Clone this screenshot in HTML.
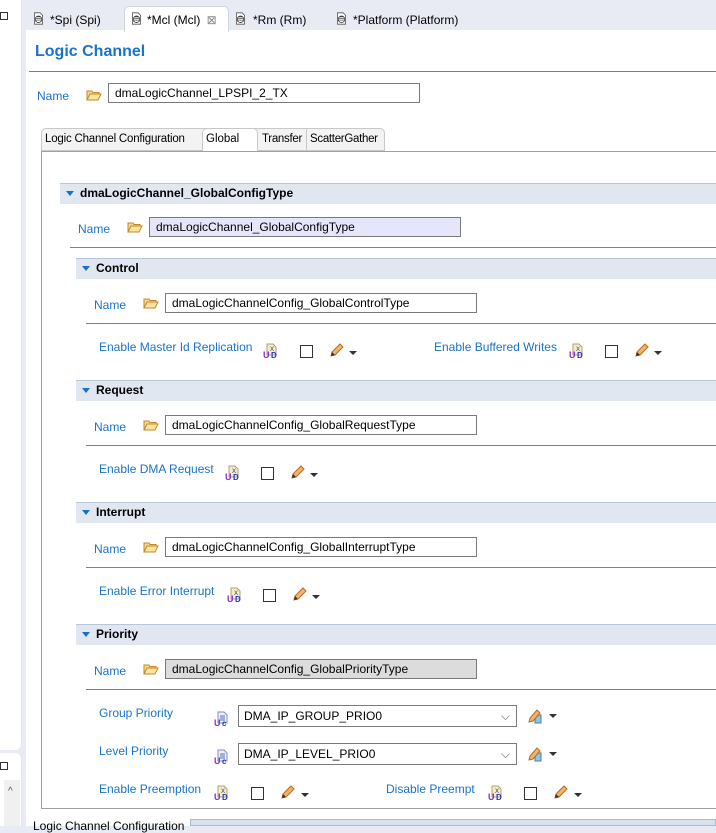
<!DOCTYPE html>
<html><head><meta charset="utf-8"><style>
*{box-sizing:border-box;margin:0;padding:0}
body{width:716px;height:826px;overflow:hidden;background:#e8ebf3;font-family:"Liberation Sans",sans-serif;font-size:12px;color:#000;position:relative}
.a{position:absolute;white-space:nowrap}
.lbl{color:#1a73c9}
.in{position:absolute;border:1px solid #7a7a7a;background:#fff;height:20px;padding:2px 6px;line-height:14px;white-space:nowrap}
.hdr{position:absolute;right:0;height:21px;background:#e1e7f0;border-top:1px solid #b7c6d9;font-weight:bold;line-height:19px;padding-left:20px}
.hdr:before{content:"";position:absolute;left:6px;top:7px;border-left:4px solid transparent;border-right:4px solid transparent;border-top:5px solid #1a6fc9}
.ln{position:absolute;right:0;height:1px;background:#808080}
.cb{position:absolute;width:13px;height:13px;border:1px solid #333;background:#fff}
.dd{position:absolute;width:0;height:0;border-left:4px solid transparent;border-right:4px solid transparent;border-top:4px solid #333}
.cmb{position:absolute;border:1px solid #7a7a7a;background:#fff;height:22px;padding:3px 5px;line-height:14px}
.tab{position:absolute;top:10px;height:22px;line-height:20px;font-size:12px}
svg{position:absolute}
</style></head><body>
<svg width="0" height="0" style="position:absolute"><defs>
<symbol id="fo" viewBox="0 0 16 12"><path d="M1 2h5l1 1.5h6v2H4L1 11z" fill="#f6d88a" stroke="#c08a2a"/><path d="M1 11l3-6h11l-3 6z" fill="#fbe3a3" stroke="#c08a2a"/></symbol>
<symbol id="pe" viewBox="0 0 16 16"><path d="M3 13l1-4 8-8 3 3-8 8z" fill="#f2b46a" stroke="#b86b1e"/><path d="M3 13l1-4 3 3z" fill="#333"/></symbol>
<symbol id="ud" viewBox="0 0 16 16"><path d="M4 1h6l3 3v8H4z" fill="#f3eccd" stroke="#b0a070"/><text x="7" y="8" font-size="6" font-family="Liberation Sans" fill="#334">X</text><text x="0" y="15" font-size="9" font-weight="bold" font-family="Liberation Sans" fill="#8a2bd0">U</text><text x="8" y="15" font-size="8" font-weight="bold" font-family="Liberation Sans" fill="#2233bb">D</text></symbol>
<symbol id="uc" viewBox="0 0 16 16"><path d="M4 1h6l3 3v8H4z" fill="#eef0f8" stroke="#8090b0"/><path d="M6 5h5M6 7h5M6 9h5" stroke="#5070c0"/><text x="0" y="15" font-size="9" font-weight="bold" font-family="Liberation Sans" fill="#8a2bd0">U</text><text x="8" y="15" font-size="8" font-weight="bold" font-family="Liberation Sans" fill="#2233bb">c</text></symbol>
<symbol id="pc" viewBox="0 0 16 16"><rect x="8" y="7" width="6" height="8" fill="#8ec6e8" stroke="#4a7fa8"/><path d="M2 14l1-4 7-8 3 3-7 8z" fill="#f2b46a" stroke="#b86b1e"/></symbol>
<symbol id="ed" viewBox="0 0 16 16"><path d="M3 1h7l3 3v11H3z" fill="#fff" stroke="#555"/><path d="M5 6h6M5 8h6M5 10h6" stroke="#555"/><circle cx="8" cy="9" r="4" fill="none" stroke="#333"/></symbol>
</defs></svg>
<!-- left panel -->
<div class="a" style="left:0;top:0;width:22px;height:750px;background:#fff;border-right:1px solid #dfe3ec;border-radius:0 0 6px 0"></div>
<div class="a" style="left:0;top:12px;width:8px;height:8px;border:1px solid #333"></div>
<div class="a" style="left:0;top:753px;width:22px;height:73px;background:#fff;border-right:1px solid #dfe3ec;border-radius:0 6px 0 0"></div>
<div class="a" style="left:0;top:762px;width:8px;height:8px;border:1px solid #333"></div>
<div class="a" style="left:4px;top:780px;width:16px;height:46px;background:#f0f0f0"></div>
<div class="a" style="left:8px;top:786px;font-size:10px;color:#555">^</div>
<!-- editor -->
<div class="a" style="left:26px;top:30px;width:690px;height:796px;background:#fff"></div>
<!-- tabs -->
<div class="a" style="left:124px;top:6px;width:105px;height:26px;background:#fff;border:1px solid #d0d5e0;border-bottom:none;border-radius:5px 5px 0 0"></div>
<svg style="left:32px;top:12px" width="13" height="13"><use href="#ed"/></svg>
<div class="tab" style="left:50px">*Spi (Spi)</div>
<svg style="left:130px;top:12px" width="13" height="13"><use href="#ed"/></svg>
<div class="tab" style="left:147px">*Mcl (Mcl) <span style="color:#888;margin-left:3px">⊠</span></div>
<svg style="left:234px;top:12px" width="13" height="13"><use href="#ed"/></svg>
<div class="tab" style="left:253px">*Rm (Rm)</div>
<svg style="left:335px;top:12px" width="13" height="13"><use href="#ed"/></svg>
<div class="tab" style="left:353px">*Platform (Platform)</div>
<div class="a" style="left:35px;top:43px;font-size:16px;font-weight:bold;color:#1a73c9">Logic Channel</div>
<div class="a" style="left:29px;top:71px;width:687px;height:1px;background:#3b8bd8"></div>
<div class="a lbl" style="left:37px;top:89px">Name</div>
<svg style="left:86px;top:89px" width="16" height="12"><use href="#fo"/></svg>
<div class="in" style="left:108px;top:83px;width:312px">dmaLogicChannel_LPSPI_2_TX</div>
<!-- inner tabs -->
<div class="a" style="left:41px;top:128px;width:344px;height:23px;background:#f3f3f3;border:1px solid #c8c8c8;border-radius:5px 5px 0 0"></div>
<div class="a" style="left:45px;top:133px;font-size:11.5px;letter-spacing:-0.2px">Logic Channel Configuration</div>
<div class="a" style="left:202px;top:128px;width:56px;height:24px;background:#fff;border:1px solid #c8c8c8;border-bottom:none;border-radius:5px 5px 0 0"></div>
<div class="a" style="left:206px;top:133px;font-size:11.5px">Global</div>
<div class="a" style="left:262px;top:133px;font-size:11.5px;letter-spacing:-0.3px">Transfer</div>
<div class="a" style="left:306px;top:129px;width:1px;height:22px;background:#c8c8c8"></div>
<div class="a" style="left:310px;top:133px;font-size:11.5px;letter-spacing:-0.3px">ScatterGather</div>
<div class="a" style="left:41px;top:151px;width:680px;height:658px;border:1px solid #a0a0a0;border-right:none"></div>
<!-- sections -->
<div class="hdr" style="left:60px;top:183px">dmaLogicChannel_GlobalConfigType</div>
<div class="a lbl" style="left:78px;top:222px">Name</div>
<svg style="left:127px;top:221px" width="16" height="12"><use href="#fo"/></svg>
<div class="in" style="left:149px;top:217px;width:312px;background:#e6e6fa">dmaLogicChannel_GlobalConfigType</div>
<div class="ln" style="left:70px;top:247px"></div>

<div class="hdr" style="left:76px;top:258px">Control</div>
<div class="a lbl" style="left:94px;top:298px">Name</div>
<svg style="left:143px;top:297px" width="16" height="12"><use href="#fo"/></svg>
<div class="in" style="left:165px;top:293px;width:312px">dmaLogicChannelConfig_GlobalControlType</div>
<div class="ln" style="left:86px;top:323px"></div>
<div class="a lbl" style="left:99px;top:340px">Enable Master Id Replication</div>
<svg style="left:263px;top:343px" width="16" height="16"><use href="#ud"/></svg>
<div class="cb" style="left:300px;top:345px"></div>
<svg style="left:328px;top:343px" width="16" height="16"><use href="#pe"/></svg>
<div class="dd" style="left:349px;top:351px"></div>
<div class="a lbl" style="left:434px;top:340px">Enable Buffered Writes</div>
<svg style="left:569px;top:343px" width="16" height="16"><use href="#ud"/></svg>
<div class="cb" style="left:605px;top:345px"></div>
<svg style="left:633px;top:343px" width="16" height="16"><use href="#pe"/></svg>
<div class="dd" style="left:654px;top:351px"></div>

<div class="hdr" style="left:76px;top:380px">Request</div>
<div class="a lbl" style="left:94px;top:420px">Name</div>
<svg style="left:143px;top:419px" width="16" height="12"><use href="#fo"/></svg>
<div class="in" style="left:165px;top:415px;width:312px">dmaLogicChannelConfig_GlobalRequestType</div>
<div class="ln" style="left:86px;top:445px"></div>
<div class="a lbl" style="left:99px;top:462px">Enable DMA Request</div>
<svg style="left:225px;top:465px" width="16" height="16"><use href="#ud"/></svg>
<div class="cb" style="left:261px;top:467px"></div>
<svg style="left:289px;top:465px" width="16" height="16"><use href="#pe"/></svg>
<div class="dd" style="left:310px;top:473px"></div>

<div class="hdr" style="left:76px;top:502px">Interrupt</div>
<div class="a lbl" style="left:94px;top:542px">Name</div>
<svg style="left:143px;top:541px" width="16" height="12"><use href="#fo"/></svg>
<div class="in" style="left:165px;top:537px;width:312px">dmaLogicChannelConfig_GlobalInterruptType</div>
<div class="ln" style="left:86px;top:567px"></div>
<div class="a lbl" style="left:99px;top:584px">Enable Error Interrupt</div>
<svg style="left:227px;top:587px" width="16" height="16"><use href="#ud"/></svg>
<div class="cb" style="left:263px;top:589px"></div>
<svg style="left:291px;top:587px" width="16" height="16"><use href="#pe"/></svg>
<div class="dd" style="left:312px;top:595px"></div>

<div class="hdr" style="left:76px;top:624px">Priority</div>
<div class="a lbl" style="left:94px;top:664px">Name</div>
<svg style="left:143px;top:663px" width="16" height="12"><use href="#fo"/></svg>
<div class="in" style="left:165px;top:659px;width:312px;background:#dcdcdc">dmaLogicChannelConfig_GlobalPriorityType</div>
<div class="ln" style="left:86px;top:689px"></div>
<div class="a lbl" style="left:99px;top:706px">Group Priority</div>
<svg style="left:214px;top:711px" width="16" height="16"><use href="#uc"/></svg>
<div class="cmb" style="left:238px;top:705px;width:279px">DMA_IP_GROUP_PRIO0<span style="position:absolute;right:6px;color:#666">⌵</span></div>
<svg style="left:527px;top:708px" width="16" height="16"><use href="#pc"/></svg>
<div class="dd" style="left:549px;top:714px"></div>
<div class="a lbl" style="left:99px;top:744px">Level Priority</div>
<svg style="left:214px;top:749px" width="16" height="16"><use href="#uc"/></svg>
<div class="cmb" style="left:238px;top:743px;width:279px">DMA_IP_LEVEL_PRIO0<span style="position:absolute;right:6px;color:#666">⌵</span></div>
<svg style="left:527px;top:746px" width="16" height="16"><use href="#pc"/></svg>
<div class="dd" style="left:549px;top:752px"></div>
<div class="a lbl" style="left:99px;top:782px">Enable Preemption</div>
<svg style="left:214px;top:785px" width="16" height="16"><use href="#ud"/></svg>
<div class="cb" style="left:251px;top:787px"></div>
<svg style="left:279px;top:785px" width="16" height="16"><use href="#pe"/></svg>
<div class="dd" style="left:301px;top:793px"></div>
<div class="a lbl" style="left:386px;top:782px">Disable Preempt</div>
<svg style="left:488px;top:785px" width="16" height="16"><use href="#ud"/></svg>
<div class="cb" style="left:524px;top:787px"></div>
<svg style="left:552px;top:785px" width="16" height="16"><use href="#pe"/></svg>
<div class="dd" style="left:574px;top:793px"></div>
<!-- bottom -->
<div class="a" style="left:33px;top:819px">Logic Channel Configuration</div>
<div class="a" style="left:190px;top:819px;width:526px;height:7px;background:#d6e2ee;border:1px solid #a8bccf"></div>
</body></html>
